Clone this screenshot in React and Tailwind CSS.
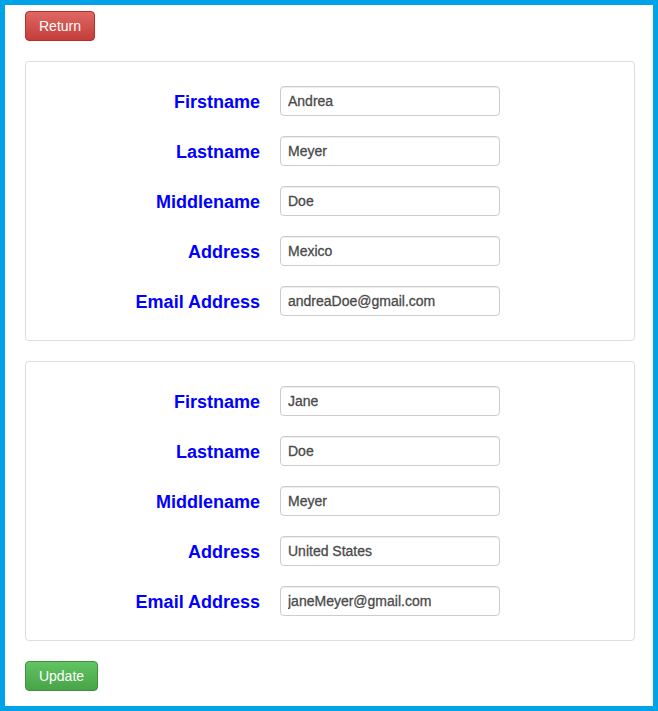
import React from 'react';

const people = [
    { Firstname: 'Andrea', Lastname: 'Meyer', Middlename: 'Doe', Address: 'Mexico', 'Email Address': 'andreaDoe@gmail.com' },
    { Firstname: 'Jane', Lastname: 'Doe', Middlename: 'Meyer', Address: 'United States', 'Email Address': 'janeMeyer@gmail.com' },
];

const fields = ['Firstname', 'Lastname', 'Middlename', 'Address', 'Email Address'];

const PersonPanel = ({ person }) => (
    <div className="border border-[#dddddd] rounded-[4px] bg-white py-6 flex flex-col gap-5">
        {fields.map(f => (
            <div key={f} className="flex items-center">
                <label className="w-[234px] text-right text-[18px] font-bold text-[#0000ff] leading-none pt-[2px]">{f}</label>
                <input
                    defaultValue={person[f]}
                    className="ml-5 w-[220px] h-[30px] px-[7px] border border-[#cccccc] rounded-[4px] text-[14px] text-[#4a4a4a] outline-none shadow-[inset_0_1px_1px_rgba(0,0,0,0.075)]"
                    style={{ WebkitTextStroke: '0.3px #4a4a4a' }}
                />
            </div>
        ))}
    </div>
);

export default function App() {
    return (
        <div
            className="h-[711px] border-[5px] border-[#00a3e8] bg-white pl-5 pr-[18px] pt-[6px] flex flex-col"
            style={{ fontFamily: '"Comic Sans MS", "Liberation Sans", sans-serif' }}
        >
            <div>
                <button className="w-[70px] h-[30px] rounded-[4px] border border-[#b92c28] bg-gradient-to-b from-[#e06763] to-[#c23d3a] text-white text-[14px]">
                    Return
                </button>
            </div>
            <div className="mt-5 flex flex-col gap-5">
                {people.map((p, i) => <PersonPanel key={i} person={p} />)}
            </div>
            <div className="mt-5">
                <button className="w-[73px] h-[30px] rounded-[4px] border border-[#3e8f3e] bg-gradient-to-b from-[#62c462] to-[#47a447] text-white text-[14px]">
                    Update
                </button>
            </div>
        </div>
    );
}
